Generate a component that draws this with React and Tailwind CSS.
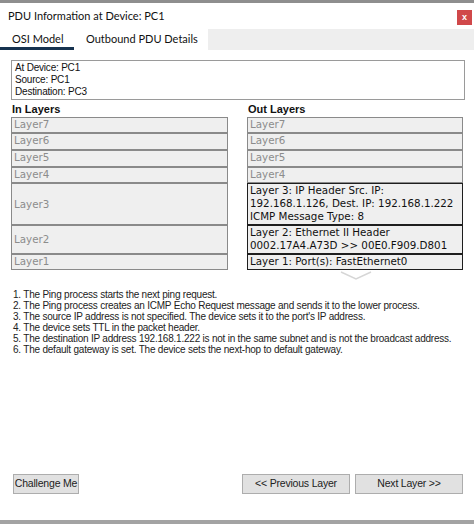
import React from 'react';

function LayerBox({ label, active, lines = 1, h }) {
  return (
    <div
      className={`border ${active ? 'border-[#1e1e1e] text-[#111]' : 'border-[#8a8a8a] text-[#8c8c8c]'} bg-[#efefef] px-[2px] text-[10.3px] leading-[13px] flex ${lines > 1 && !active ? 'items-center' : 'items-start'} font-['DejaVu_Sans',sans-serif] whitespace-nowrap overflow-hidden`}
      style={{ height: h }}
    >
      <div className="whitespace-pre-line">{label}</div>
    </div>
  );
}

export default function App() {
  const inRows = [
    { label: 'Layer7', h: 16 },
    { label: 'Layer6', h: 17 },
    { label: 'Layer5', h: 17 },
    { label: 'Layer4', h: 16 },
    { label: 'Layer3', h: 42, lines: 3 },
    { label: 'Layer2', h: 29, lines: 2 },
    { label: 'Layer1', h: 16 },
  ];
  const outRows = [
    { label: 'Layer7', h: 16 },
    { label: 'Layer6', h: 17 },
    { label: 'Layer5', h: 17 },
    { label: 'Layer4', h: 16 },
    { label: 'Layer 3: IP Header Src. IP:\n192.168.1.126, Dest. IP: 192.168.1.222\nICMP Message Type: 8', h: 42, active: true, lines: 3 },
    { label: 'Layer 2: Ethernet II Header\n0002.17A4.A73D >> 00E0.F909.D801', h: 29, active: true, lines: 2 },
    { label: 'Layer 1: Port(s): FastEthernet0', h: 16, active: true },
  ];
  const steps = [
    '1. The Ping process starts the next ping request.',
    '2. The Ping process creates an ICMP Echo Request message and sends it to the lower process.',
    "3. The source IP address is not specified. The device sets it to the port's IP address.",
    '4. The device sets TTL in the packet header.',
    '5. The destination IP address 192.168.1.222 is not in the same subnet and is not the broadcast address.',
    '6. The default gateway is set. The device sets the next-hop to default gateway.',
  ];

  return (
    <div className="w-[474px] h-[524px] bg-white flex flex-col overflow-hidden font-['Liberation_Sans',Arial,sans-serif]">
      <div className="h-[3px] bg-[#8e8e8e] shrink-0" />

      {/* title */}
      <div className="h-[25px] flex items-center justify-between pl-2 pr-[2px] shrink-0">
        <div className="text-[11px] text-[#111] font-['Lato',sans-serif] pt-[1px] whitespace-nowrap">PDU Information at Device: PC1</div>
        <div className="w-[15px] h-[15px] bg-[#d0484a] text-white text-[9px] leading-[15px] text-center font-bold mt-[3px]">x</div>
      </div>

      {/* tabs */}
      <div className="mt-[1px] h-[21px] flex shrink-0 font-['Lato',sans-serif] text-[11px] text-[#111] whitespace-nowrap">
        <div className="w-[208px] flex bg-white">
          <div className="w-[74px] relative flex items-center pl-3">
            OSI Model
            <div className="absolute left-0 right-0 bottom-0 h-[3px] bg-[#16324f]" />
          </div>
          <div className="flex items-center pl-3">Outbound PDU Details</div>
        </div>
        <div className="flex-1 bg-[#eeeeee]" />
      </div>

      {/* info box */}
      <div className="mx-[11px] mt-[10px] w-[454px] h-[40px] border border-[#9a9a9a] px-[3px] pt-[1px] text-[10px] leading-[12px] text-[#111] tracking-[-0.2px] shrink-0">
        <div>At Device: PC1</div>
        <div>Source: PC1</div>
        <div>Destination: PC3</div>
      </div>

      {/* layers */}
      <div className="flex mx-[11px] mt-[3px] gap-[19px] shrink-0">
        <div className="w-[218px] flex flex-col">
          <div className="font-bold text-[11px] leading-[13px] text-[#111] pl-[1px] h-[14px]">In Layers</div>
          {inRows.map((r) => (
            <LayerBox key={r.label} {...r} />
          ))}
        </div>
        <div className="w-[217px] flex flex-col">
          <div className="font-bold text-[11px] leading-[13px] text-[#111] pl-[1px] h-[14px]">Out Layers</div>
          {outRows.map((r, i) => (
            <LayerBox key={i} {...r} />
          ))}
          <div className="flex justify-center pt-[1px] pl-[2px]">
            <svg width="32" height="9" viewBox="0 0 32 9">
              <path d="M1 1 L16 8 L31 1" fill="none" stroke="#d6d6d6" strokeWidth="1.5" />
            </svg>
          </div>
        </div>
      </div>

      {/* steps */}
      <div className="mx-[13px] mt-[9px] text-[10px] leading-[11px] text-[#222] tracking-[-0.22px] shrink-0">
        {steps.map((s) => (
          <div key={s} className="whitespace-nowrap">{s}</div>
        ))}
      </div>

      <div className="flex-1" />

      {/* buttons */}
      <div className="flex items-center mx-[13px] mb-[26px] text-[10.5px] tracking-[-0.2px] text-[#222] shrink-0 whitespace-nowrap">
        <button className="h-[20px] w-[66px] px-0 bg-[#e1e1e1] border border-[#adadad]">Challenge Me</button>
        <div className="flex-1" />
        <button className="h-[20px] w-[108px] bg-[#e1e1e1] border border-[#adadad] mr-[5px]">&lt;&lt; Previous Layer</button>
        <button className="h-[20px] w-[108px] bg-[#e1e1e1] border border-[#adadad] mr-[-2px]">Next Layer &gt;&gt;</button>
      </div>

      <div className="h-[4px] bg-[#a3a3a3] shrink-0" />
    </div>
  );
}
